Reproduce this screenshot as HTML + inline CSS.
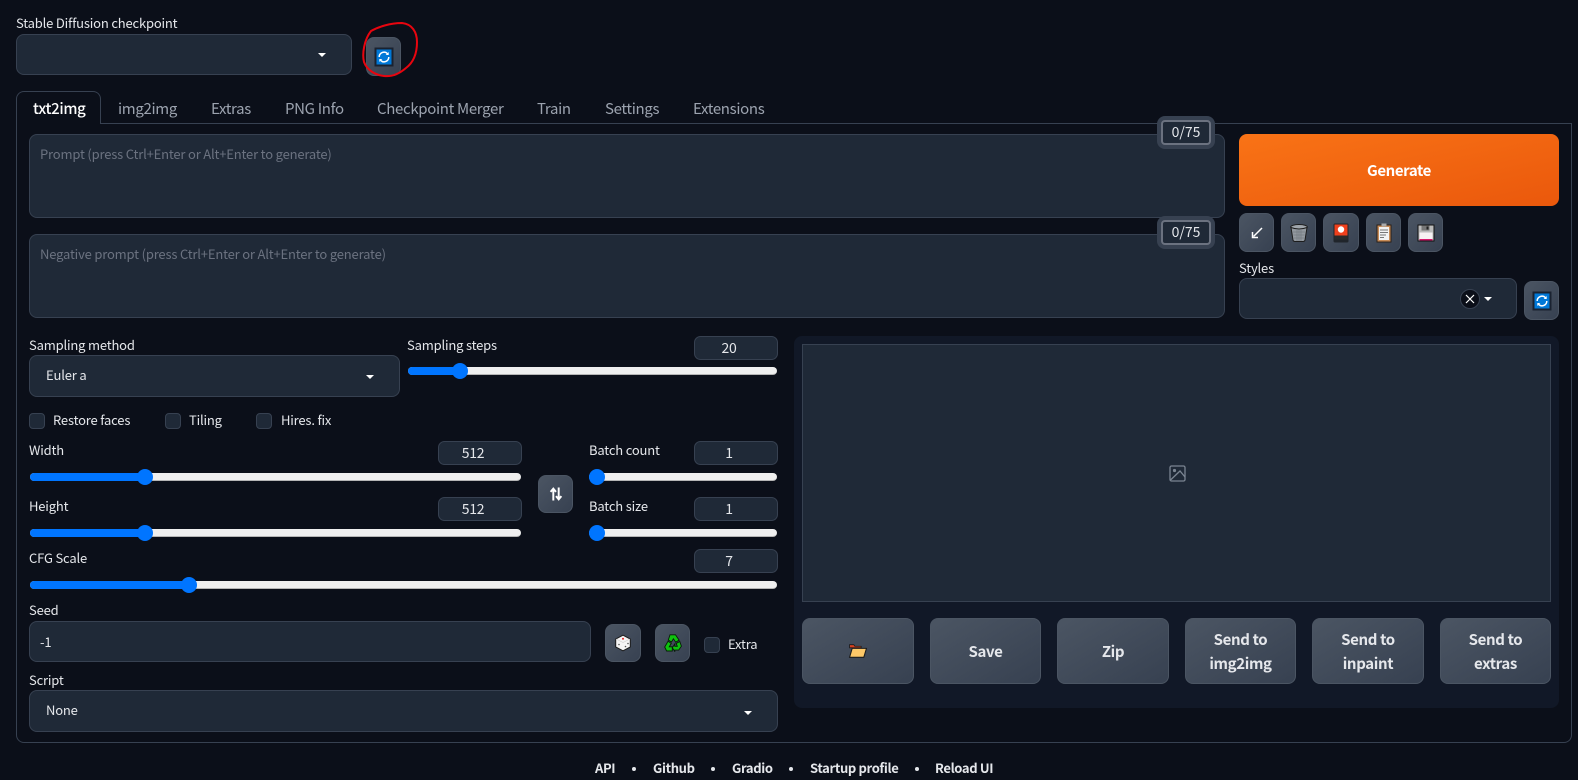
<!DOCTYPE html>
<html><head><meta charset="utf-8"><style>
*{box-sizing:border-box}
html,body{margin:0;padding:0;width:1578px;height:780px;overflow:hidden;background:#0b0f19}
body{font-family:"Noto Sans CJK JP","Liberation Sans",sans-serif;color:#e5e7eb;font-size:13px;letter-spacing:-.18px;position:relative}
.a{position:absolute}
.t{position:absolute;white-space:nowrap;line-height:20px;height:20px}
.box{position:absolute;background:#1f2937;border:1px solid #374151;border-radius:8px}
.btn{position:absolute;border-radius:8px;border:1px solid #4b5563;background:linear-gradient(to bottom right,#4b5563,#374151)}
.btn svg{position:absolute;left:50%;top:50%;transform:translate(-50%,-50%)}
.arrow{position:absolute;width:0;height:0;border-left:4px solid transparent;border-right:4px solid transparent;border-top:4px solid #fff}
.tab{position:absolute;top:98px;font-size:15px;letter-spacing:-.33px;line-height:22px;color:#9ca3af;white-space:nowrap}
.num{position:absolute;width:84px;height:24px;background:#1f2937;border:1px solid #374151;border-radius:6.5px;text-align:center;padding-right:14px;line-height:23px;font-size:14px;letter-spacing:-.3px;color:#e5e7eb}
.sl{position:absolute;height:8px;background:#efefef;border-radius:4px;border-bottom:1px solid #b5b5b5}
.sl i{position:absolute;left:0;top:0;height:8px;background:#0075ff;border-radius:4px 0 0 4px}
.sl b{position:absolute;top:-4px;width:16px;height:16px;border-radius:50%;background:#0075ff}
.cb{position:absolute;width:16px;height:16px;background:#1f2937;border:1px solid #374151;border-radius:4px}
.ob{position:absolute;top:618px;height:66px;padding-top:2px;font-weight:700;font-size:15px;letter-spacing:-.35px;line-height:24px;color:#e5e7eb;text-align:center;display:flex;align-items:center;justify-content:center}
.cnt{position:absolute;left:1161px;width:50px;height:25px;background:#1f2937;border:2px solid #6b7280;border-radius:4px;box-shadow:0 0 0 4px #374151;text-align:center;line-height:21px;font-size:14px;letter-spacing:0;color:#e5e7eb}
.ph{position:absolute;left:40px;color:#6b7280;line-height:20px;white-space:nowrap}
.f{position:absolute;top:758px;font-weight:700;font-size:13px;letter-spacing:-.35px;line-height:20px;color:#e5e7eb;white-space:nowrap}
.dot{position:absolute;top:767px;width:4px;height:4px;border-radius:50%;background:#e5e7eb}
</style></head><body>

<div class="t" style="left:16px;top:13px">Stable Diffusion checkpoint</div>
<div class="box" style="left:16px;top:34px;width:336px;height:41px"></div>
<div class="arrow" style="left:318px;top:53px"></div>
<div class="btn" style="left:366px;top:37px;width:35px;height:39px"><svg width="19" height="19" viewBox="0 0 19 19"><rect width="19" height="19" fill="#1a2230"/><rect x="2" y="2" width="15" height="15" fill="#0078d7"/><path d="M4.700 9.500a4.800 4.800 0 0 1 8.200-3.400M14.300 9.500a4.800 4.800 0 0 1-8.200 3.400" fill="none" stroke="#fff" stroke-width="1.500"/><path d="M14.200 4.500v3h-3zM4.800 14.500v-3h3z" fill="#fff"/></svg></div>

<div class="a" style="left:16px;top:123px;width:1556px;height:620px;border:1px solid #374151;border-radius:0 0 8px 8px"></div>
<div class="a" style="left:16px;top:91px;width:85px;height:33px;background:#0b0f19;border:1px solid #374151;border-bottom:none;border-radius:8px 8px 0 0"></div>
<div class="tab" style="left:33px;color:#fff;font-weight:500">txt2img</div>
<div class="tab" style="left:118px">img2img</div>
<div class="tab" style="left:211px">Extras</div>
<div class="tab" style="left:285px">PNG Info</div>
<div class="tab" style="left:377px">Checkpoint Merger</div>
<div class="tab" style="left:537px">Train</div>
<div class="tab" style="left:605px">Settings</div>
<div class="tab" style="left:693px">Extensions</div>

<div class="box" style="left:29px;top:134px;width:1196px;height:84px"></div>
<div class="ph" style="top:144px">Prompt (press Ctrl+Enter or Alt+Enter to generate)</div>
<div class="cnt" style="top:120px">0/75</div>
<div class="box" style="left:29px;top:234px;width:1196px;height:84px"></div>
<div class="ph" style="top:244px">Negative prompt (press Ctrl+Enter or Alt+Enter to generate)</div>
<div class="cnt" style="top:220px">0/75</div>

<div class="a" style="left:1239px;top:134px;width:320px;height:72px;border-radius:8px;background:linear-gradient(to bottom right,#f97316,#ea580c);text-align:center;line-height:74px;font-weight:700;font-size:15px;letter-spacing:-.4px;color:#fff">Generate</div>

<div class="btn" style="left:1239px;top:213px;width:35px;height:39px"><svg width="12" height="12" viewBox="0 0 12 12"><path d="M11 1L2.500 9.500" stroke="#fff" stroke-width="1.500"/><path d="M1.500 5v5.500H7" fill="none" stroke="#fff" stroke-width="1.500"/></svg></div>
<div class="btn" style="left:1281px;top:213px;width:35px;height:39px"><svg width="18" height="18" viewBox="0 0 18 18"><ellipse cx="9" cy="3" rx="8.300" ry="2.500" fill="#a0a6ac" stroke="#1d1d1d"/><path d="M1 3.500l2 12.500q.3 1.500 2 1.500h8q1.700 0 2-1.500l2-12.500q-8 3-16 0z" fill="#9399a0" stroke="#1d1d1d"/><path d="M3 8h12M3.500 11h11M4 14h10M7 6v11M9 6v11M11 6v11" stroke="#757b81" stroke-width=".7"/></svg></div>
<div class="btn" style="left:1323px;top:213px;width:36px;height:39px"><svg width="15" height="19" viewBox="0 0 15 19"><rect width="15" height="19" rx="1.500" fill="#20252b"/><rect x="1" y="1" width="13" height="11" fill="#f0401c"/><rect x="1" y="12" width="13" height="4" fill="#2a2a2a"/><circle cx="7.500" cy="6" r="3.200" fill="#fff"/></svg></div>
<div class="btn" style="left:1366px;top:213px;width:35px;height:39px"><svg width="15" height="19" viewBox="0 0 15 19"><rect x=".5" y="1.500" width="14" height="17" fill="#c98d58" stroke="#2a2018"/><rect x="2.500" y="3.500" width="10" height="13" fill="#f2f2f2"/><rect x="5" y="0" width="5" height="3" fill="#aaa"/><path d="M3.500 6.500h8M3.500 9h8M3.500 11.500h6M3.500 14h4" stroke="#777" stroke-width="1.100"/></svg></div>
<div class="btn" style="left:1408px;top:213px;width:35px;height:39px"><svg width="17" height="17" viewBox="0 0 17 17"><rect x=".5" y=".5" width="16" height="16" fill="#bbb" stroke="#111"/><rect x="4" y="1" width="8" height="5" fill="#777"/><rect x="9" y="2" width="2" height="3" fill="#222"/><rect x="2" y="8" width="13" height="8" fill="#f7f2f4"/><rect x="2" y="14.500" width="13" height="1.500" fill="#d6196e"/></svg></div>

<div class="t" style="left:1239px;top:258px">Styles</div>
<div class="box" style="left:1239px;top:278px;width:278px;height:41px"></div>
<div class="a" style="left:1460px;top:289px;width:20px;height:20px;border-radius:50%;background:#0b0f19;border:1px solid #374151"><svg class="a" style="left:4px;top:4px" width="10" height="10" viewBox="0 0 10 10"><path d="M1 1l8 8M9 1l-8 8" stroke="#fff" stroke-width="1.200"/></svg></div>
<div class="arrow" style="left:1484px;top:297px"></div>
<div class="btn" style="left:1524px;top:281px;width:35px;height:39px"><svg width="19" height="19" viewBox="0 0 19 19"><rect width="19" height="19" fill="#1a2230"/><rect x="2" y="2" width="15" height="15" fill="#0078d7"/><path d="M4.700 9.500a4.800 4.800 0 0 1 8.200-3.400M14.300 9.500a4.800 4.800 0 0 1-8.200 3.400" fill="none" stroke="#fff" stroke-width="1.500"/><path d="M14.200 4.500v3h-3zM4.800 14.500v-3h3z" fill="#fff"/></svg></div>

<div class="t" style="left:29px;top:335px">Sampling method</div>
<div class="box" style="left:29px;top:355px;width:371px;height:42px"></div>
<div class="t" style="left:46px;top:365px">Euler a</div>
<div class="arrow" style="left:366px;top:375px"></div>

<div class="t" style="left:407px;top:335px">Sampling steps</div>
<div class="num" style="left:694px;top:336px">20</div>
<div class="sl" style="left:408px;top:367px;width:369px"><i style="width:52px"></i><b style="left:44px"></b></div>

<div class="cb" style="left:29px;top:413px"></div><div class="t" style="left:53px;top:410px">Restore faces</div>
<div class="cb" style="left:165px;top:413px"></div><div class="t" style="left:189px;top:410px">Tiling</div>
<div class="cb" style="left:256px;top:413px"></div><div class="t" style="left:281px;top:410px">Hires. fix</div>

<div class="t" style="left:29px;top:440px">Width</div>
<div class="num" style="left:438px;top:441px">512</div>
<div class="sl" style="left:30px;top:473px;width:491px"><i style="width:115px"></i><b style="left:107px"></b></div>
<div class="t" style="left:29px;top:496px">Height</div>
<div class="num" style="left:438px;top:497px">512</div>
<div class="sl" style="left:30px;top:529px;width:491px"><i style="width:115px"></i><b style="left:107px"></b></div>

<div class="btn" style="left:538px;top:475px;width:35px;height:38px"><svg width="14" height="14" viewBox="0 0 13 13"><path d="M4 12.500V1.500M1.500 4.500L4 1.500l2.500 3M9 .5v11M6.500 8.500L9 11.500l2.500-3" fill="none" stroke="#fff" stroke-width="1.800"/></svg></div>

<div class="t" style="left:589px;top:440px">Batch count</div>
<div class="num" style="left:694px;top:441px">1</div>
<div class="sl" style="left:589px;top:473px;width:188px"><b style="left:0"></b></div>
<div class="t" style="left:589px;top:496px">Batch size</div>
<div class="num" style="left:694px;top:497px">1</div>
<div class="sl" style="left:589px;top:529px;width:188px"><b style="left:0"></b></div>

<div class="t" style="left:29px;top:548px">CFG Scale</div>
<div class="num" style="left:694px;top:549px">7</div>
<div class="sl" style="left:30px;top:581px;width:747px"><i style="width:159px"></i><b style="left:151px"></b></div>

<div class="t" style="left:29px;top:600px">Seed</div>
<div class="box" style="left:29px;top:621px;width:562px;height:41px"></div>
<div class="t" style="left:40px;top:632px">-1</div>
<div class="btn" style="left:605px;top:624px;width:36px;height:38px"><svg width="17" height="17" viewBox="0 0 17 17"><path d="M8.500 .7L15.800 4.500V12.500L8.500 16.300L1.200 12.500V4.500z" fill="#f4f4f4" stroke="#1b1b1b"/><path d="M1.500 4.500L8.500 8l7-3.500" fill="none" stroke="#d0d0d0" stroke-width=".6"/><circle cx="8.500" cy="4.300" r="1" fill="#e02020"/><circle cx="4.500" cy="10" r=".8" fill="#555"/><circle cx="11" cy="12" r=".8" fill="#555"/><circle cx="13.500" cy="9" r=".8" fill="#555"/></svg></div>
<div class="btn" style="left:655px;top:624px;width:35px;height:38px"><svg width="18" height="18" viewBox="0 0 18 18"><g fill="#0fc20f" stroke="#061c06" stroke-width=".9"><path d="M6 .8h5.500l3.700 5.400-3.500 2-2.300-3.400-1.900 3.200L4.300 6z"/><path d="M4 7.300L.7 13l1.900 4h5.700v-4.200H5.300l2-3.400z"/><path d="M15.800 7.500l-3.600 2 1.100 2.800h-2.500V10L8.300 13.800l2.500 3.600v-1.300h3.900l2.700-3.900z"/></g></svg></div>
<div class="cb" style="left:704px;top:637px"></div><div class="t" style="left:728px;top:634px">Extra</div>

<div class="t" style="left:29px;top:670px">Script</div>
<div class="box" style="left:29px;top:690px;width:749px;height:42px"></div>
<div class="t" style="left:46px;top:700px">None</div>
<div class="arrow" style="left:744px;top:711px"></div>

<div class="a" style="left:794px;top:336px;width:765px;height:372px;background:#111827;border-radius:8px"></div>
<div class="a" style="left:802px;top:344px;width:749px;height:258px;background:#1f2937;border:1px solid #374151"></div>
<svg class="a" style="left:1168px;top:464px" width="19" height="19" viewBox="0 0 19 19" fill="none" stroke="#7b8592" stroke-width="1.300"><rect x="2" y="2" width="15" height="15" rx="1.500"/><circle cx="6.500" cy="6.500" r="1.600" fill="#7b8592" stroke="none"/><path d="M2.500 16L12 7l5 6"/></svg>

<div class="btn ob" style="left:802px;width:112px"><svg width="19" height="15" viewBox="0 0 18 14"><path d="M1 1h4l1 1.500h6V4H1z" fill="#d8401f" stroke="#1c1c1c" stroke-width=".8"/><path d="M1 13L3.500 4.500H17L14.500 13z" fill="#fdc868" stroke="#1c1c1c"/></svg></div>
<div class="btn ob" style="left:930px;width:111px">Save</div>
<div class="btn ob" style="left:1057px;width:112px">Zip</div>
<div class="btn ob" style="left:1185px;width:111px">Send to<br>img2img</div>
<div class="btn ob" style="left:1312px;width:112px">Send to<br>inpaint</div>
<div class="btn ob" style="left:1440px;width:111px">Send to<br>extras</div>

<div class="f" style="left:595px">API</div><div class="dot" style="left:632px"></div>
<div class="f" style="left:653px">Github</div><div class="dot" style="left:711px"></div>
<div class="f" style="left:732px">Gradio</div><div class="dot" style="left:789px"></div>
<div class="f" style="left:810px">Startup profile</div><div class="dot" style="left:915px"></div>
<div class="f" style="left:935px">Reload UI</div>

<svg class="a" style="left:0;top:0;pointer-events:none" width="440" height="90" viewBox="0 0 440 90"><path d="M371 31C378 27 390 23 402 23 412 24 417 32 417 42 417 52 414 62 406 68 399 74 392 77 384 76 375 75 367 70 364 62 362 54 364 40 371 31Z" fill="none" stroke="#e8050f" stroke-width="2"/></svg>
</body></html>
